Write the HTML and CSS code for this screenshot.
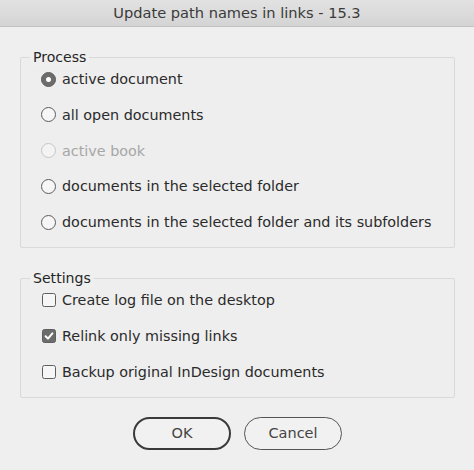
FILE: index.html
```html
<!DOCTYPE html>
<html>
<head>
<meta charset="utf-8">
<link rel="stylesheet" href="styles.css">
</head>
<body>
<div class="window">
  <div class="titlebar">Update path names in links - 15.3</div>
  <div class="content">
    <fieldset class="group">
      <legend class="legend">Process</legend>
      <div class="rows">
        <div class="row"><span class="radio on"></span><span class="label">active document</span></div>
        <div class="row"><span class="radio"></span><span class="label">all open documents</span></div>
        <div class="row disabled"><span class="radio"></span><span class="label">active book</span></div>
        <div class="row"><span class="radio"></span><span class="label">documents in the selected folder</span></div>
        <div class="row"><span class="radio"></span><span class="label">documents in the selected folder and its subfolders</span></div>
      </div>
    </fieldset>
    <fieldset class="group">
      <legend class="legend">Settings</legend>
      <div class="rows">
        <div class="row"><span class="check"></span><span class="label">Create log file on the desktop</span></div>
        <div class="row"><span class="check on"><svg viewBox="0 0 14 14" width="14" height="14"><path d="M3.6 7.2 L6 9.6 L10.4 4.4" fill="none" stroke="#fff" stroke-width="2" stroke-linecap="round" stroke-linejoin="round"/></svg></span><span class="label">Relink only missing links</span></div>
        <div class="row"><span class="check"></span><span class="label">Backup original InDesign documents</span></div>
      </div>
    </fieldset>
    <div class="buttons">
      <button class="btn default">OK</button>
      <button class="btn">Cancel</button>
    </div>
  </div>
</div>
</body>
</html>
```
FILE: styles.css
```css
html, body {
  margin: 0;
  padding: 0;
}
body {
  width: 474px;
  height: 470px;
  background: #efefef;
  font-family: "DejaVu Sans", "Liberation Sans", sans-serif;
  color: #2a2a2a;
  overflow: hidden;
}
.window {
  width: 474px;
  height: 470px;
  display: flex;
  flex-direction: column;
}
.titlebar {
  height: 26px;
  line-height: 26px;
  text-align: center;
  font-size: 14.6px;
  color: #3a3a3a;
  background: linear-gradient(#e2e2e2, #d4d4d4);
  border-bottom: 1px solid #c2c2c2;
}
.content {
  display: flex;
  flex-direction: column;
  padding: 21px 19px 0 20px;
  gap: 21px;
}
.group {
  margin: 0;
  border: 1px solid #d9d9d9;
  border-radius: 2px;
  padding: 4px 10px 16px 10px;
  background: #eeeeee;
}
.legend {
  font-size: 14.1px;
  line-height: 18px;
  padding: 0 3px;
  margin-left: -1px;
  color: #262626;
  background: #efefef;
}
.rows {
  display: flex;
  flex-direction: column;
  gap: 17.75px;
  padding-left: 10px;
}
.row {
  display: flex;
  align-items: center;
  height: 18px;
  gap: 6px;
  font-size: 14.35px;
}
.radio {
  width: 13px;
  height: 13px;
  border-radius: 50%;
  border: 1px solid #5c5c5c;
  background: #f6f6f6;
  flex: none;
  position: relative;
}
.radio.on {
  background: #6c6c6c;
  border-color: #5e5e5e;
}
.radio.on::after {
  content: "";
  position: absolute;
  left: 4px;
  top: 4px;
  width: 5px;
  height: 5px;
  border-radius: 50%;
  background: #fff;
}
.disabled .radio {
  border-color: #c6c6c6;
  background: #f3f3f3;
}
.disabled .label {
  color: #a6a6a6;
}
.check {
  width: 12px;
  height: 12px;
  border: 1px solid #5e5e5e;
  border-radius: 2.5px;
  background: #f6f6f6;
  flex: none;
  position: relative;
  margin-left: 1px;
}
.check.on {
  background: #6c6c6c;
  border-color: #5e5e5e;
}
.check svg {
  position: absolute;
  left: -1px;
  top: -1px;
}
.buttons {
  display: flex;
  justify-content: center;
  gap: 13px;
  margin-top: -2px;
  padding-left: 0;
}
.btn {
  width: 98px;
  height: 33px;
  border-radius: 17px;
  border: 1.5px solid #555;
  background: #f1f1f1;
  font-family: "DejaVu Sans", "Liberation Sans", sans-serif;
  font-size: 14.5px;
  color: #444;
  padding: 0;
}
.btn.default {
  border: 2.5px solid #3a3a3a;
}
```
